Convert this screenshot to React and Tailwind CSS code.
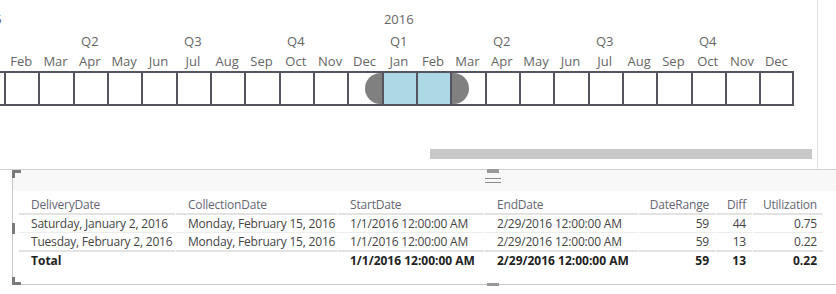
const MONTHS = ['Jan', 'Feb', 'Mar', 'Apr', 'May', 'Jun', 'Jul', 'Aug', 'Sep', 'Oct', 'Nov', 'Dec'];

// Jan 2015 .. Dec 2016, Jan 2015 sits just off the left edge
const CELLS = [2015, 2016].flatMap((year) =>
  MONTHS.map((m, i) => ({ year, m, i, key: `${year}-${m}` }))
);

const ROWS = [
  ['Saturday, January 2, 2016', 'Monday, February 15, 2016', '1/1/2016 12:00:00 AM', '2/29/2016 12:00:00 AM', '59', '44', '0.75'],
  ['Tuesday, February 2, 2016', 'Monday, February 15, 2016', '1/1/2016 12:00:00 AM', '2/29/2016 12:00:00 AM', '59', '13', '0.22'],
];
const HEAD = ['DeliveryDate', 'CollectionDate', 'StartDate', 'EndDate', 'DateRange', 'Diff', 'Utilization'];
const TOTAL = ['Total', '', '1/1/2016 12:00:00 AM', '2/29/2016 12:00:00 AM', '59', '13', '0.22'];
const RIGHT = [false, false, false, false, true, true, true];

const grid = 'grid grid-cols-[156px_161px_146px_153px_76px_36px_70px] gap-x-px';

function Timeline() {
  return (
    <div className="overflow-hidden">
      <div className="ml-[-30.33px] pt-[9px] grid grid-cols-[repeat(24,34.333px)] text-[13px] text-[#666] leading-5">
        {CELLS.map((c) => (
          <div key={'y' + c.key} className="h-5 flex justify-center whitespace-nowrap">
            {c.i === 0 ? c.year : ''}
          </div>
        ))}
        {CELLS.map((c) => (
          <div key={'q' + c.key} className="mt-[2px] h-5 flex justify-center whitespace-nowrap">
            {c.i % 3 === 0 ? `Q${c.i / 3 + 1}` : ''}
          </div>
        ))}
        {CELLS.map((c) => (
          <div key={'m' + c.key} className="h-5 text-center">
            {c.m}
          </div>
        ))}
        {CELLS.map((c, n) => {
          const sel = c.year === 2016 && c.i < 2;
          return (
            <div
              key={'c' + c.key}
              className={`relative h-[35px] border-l-2 border-y-2 border-[#55555f] ${
                n === 23 ? 'border-r-2' : ''
              } ${sel ? 'bg-[#add8e6]' : 'bg-white'}`}
            >
              {c.year === 2015 && c.i === 11 && (
                <div className="absolute right-0 top-0 h-full w-[17px] rounded-l-full bg-[#808080]" />
              )}
              {c.year === 2016 && c.i === 2 && (
                <div className="absolute left-0 top-0 h-full w-[17px] rounded-r-full bg-[#808080]" />
              )}
            </div>
          );
        })}
      </div>
    </div>
  );
}

function Cell({ v, i, className }) {
  return (
    <div className={`whitespace-nowrap ${RIGHT[i] ? 'text-right pr-[6px]' : 'pl-[12px]'} ${className}`}>
      {v}
    </div>
  );
}

export default function App() {
  return (
    <div className="w-[836px] h-[294px] bg-white overflow-hidden font-['Open_Sans',sans-serif]">
      <div className="flex h-[169px]">
        <div className="w-[818px] border-r border-[#e6e6e6]">
          <Timeline />
          <div className="ml-[430px] mt-[43px] h-[10px] w-[382px] bg-[#c8c8c8]" />
        </div>
        <div className="flex-1" />
      </div>
      <div className="h-px bg-[#d0d0d0]" />

      <div className="relative ml-[12px] h-[115px] border-l border-b border-[#c8c8c8]">
        {/* resize handles */}
        <div className="absolute -left-px top-0 h-[8px] w-[3px] bg-[#7a7a7a]" />
        <div className="absolute -left-px top-0 h-[3px] w-[9px] bg-[#7a7a7a]" />
        <div className="absolute -left-px bottom-[-1px] h-[8px] w-[3px] bg-[#7a7a7a]" />
        <div className="absolute -left-px bottom-[-1px] h-[3px] w-[9px] bg-[#7a7a7a]" />
        <div className="absolute -left-px top-[53px] h-[11px] w-[3px] bg-[#7a7a7a]" />
        <div className="absolute left-[474px] top-[-1px] h-[4px] w-[12px] bg-[#999]" />
        <div className="absolute left-[474px] bottom-[-2px] h-[3px] w-[12px] bg-[#999]" />

        <div className="h-[21px] bg-[#f8f8f8] pl-[472px] pt-[8px]">
          <div className="flex flex-col gap-[3px]">
            <div className="h-px w-[16px] bg-[#8a8a8a]" />
            <div className="h-px w-[16px] bg-[#8a8a8a]" />
          </div>
        </div>

        <div className="ml-[6px] text-[12px] leading-[16px]">
          <div className={grid}>
            {HEAD.map((h, i) => (
              <Cell key={h} v={h} i={i} className="pt-[6px] tracking-[-0.2px] border-b-2 border-[#e3e3e3] text-[#666672]" />
            ))}
          </div>
          {ROWS.map((r, ri) => (
            <div key={ri} className={grid}>
              {r.map((v, i) => (
                <Cell
                  key={i}
                  v={v}
                  i={i}
                  className={`pt-[1px] tracking-[-0.2px] text-[#444] ${
                    ri === 1 ? 'border-b-2 border-[#e3e3e3]' : 'border-b border-[#ededed]'
                  }`}
                />
              ))}
            </div>
          ))}
          <div className={grid}>
            {TOTAL.map((v, i) => (
              <Cell key={i} v={v} i={i} className="pt-[1px] font-bold text-[#222]" />
            ))}
          </div>
        </div>
      </div>
    </div>
  );
}
